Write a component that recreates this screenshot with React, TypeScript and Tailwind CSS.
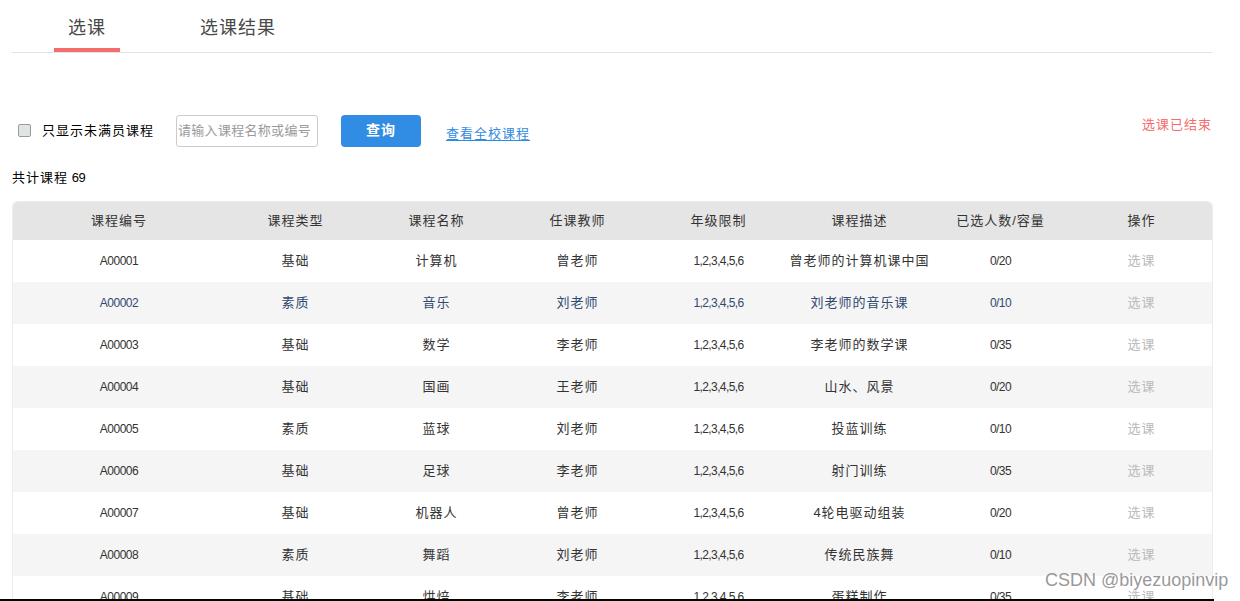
import React from 'react';

const font = { fontFamily: '"Liberation Sans", "Noto Sans CJK SC", sans-serif' };

const courses = [
  ['A00001', '基础', '计算机', '曾老师', '曾老师的计算机课中国', '0/20'],
  ['A00002', '素质', '音乐', '刘老师', '刘老师的音乐课', '0/10'],
  ['A00003', '基础', '数学', '李老师', '李老师的数学课', '0/35'],
  ['A00004', '基础', '国画', '王老师', '山水、风景', '0/20'],
  ['A00005', '素质', '蓝球', '刘老师', '投蓝训练', '0/10'],
  ['A00006', '基础', '足球', '李老师', '射门训练', '0/35'],
  ['A00007', '基础', '机器人', '曾老师', '4轮电驱动组装', '0/20'],
  ['A00008', '素质', '舞蹈', '刘老师', '传统民族舞', '0/10'],
  ['A00009', '基础', '烘焙', '李老师', '蛋糕制作', '0/35'],
];

const headers = ['课程编号', '课程类型', '课程名称', '任课教师', '年级限制', '课程描述', '已选人数/容量', '操作'];

const cols = 'grid grid-cols-[212px_repeat(7,1fr)]';

export default function App() {
  return (
    <div style={font} className="relative h-[601px] flex flex-col overflow-hidden bg-white text-[#333]">
      <div className="flex-1 min-h-0 overflow-hidden">
        {/* Tabs */}
        <div className="ml-[12px] w-[1200px] flex border-b border-[#e4e4e4] pl-[42px]">
          <div className="px-[14px] pt-[19px] pb-[11px] border-b-4 border-[#f56c6c] text-[18px] leading-[18px] tracking-[1px] text-[#4a4a4a]">
            选课
          </div>
          <div className="ml-[66px] px-[14px] pt-[19px] pb-[11px] border-b-4 border-transparent text-[18px] leading-[18px] tracking-[1px] text-[#4a4a4a]">
            选课结果
          </div>
        </div>

        {/* Filters */}
        <div className="mt-[61px] ml-[12px] w-[1200px] flex items-center h-[33px] pl-[6px]">
          <span className="w-[13px] h-[13px] rounded-[2px] border border-[#9a9a9a] bg-[#dfe5e5]" />
          <span className="ml-[11px] text-[13px] leading-[20px] tracking-[1px] text-black">只显示未满员课程</span>
          <div className="ml-[22px] w-[142px] h-[32px] rounded-[3px] border border-[#ccc] flex items-center pl-[1px] text-[13px] tracking-[0.3px] text-[#9a9a9a] whitespace-nowrap overflow-hidden">
            请输入课程名称或编号
          </div>
          <button className="ml-[23px] w-[80px] h-[32px] rounded-[4px] bg-[#318ce3] text-white text-[14px] font-bold tracking-[1px]">
            查询
          </button>
          <a className="ml-[25px] mt-[6px] text-[13px] leading-[20px] tracking-[1px] text-[#2f8be0] underline underline-offset-2">
            查看全校课程
          </a>
          <span className="ml-auto self-start mt-[1px] text-[13px] leading-[20px] tracking-[1px] text-[#f56c6c]">
            选课已结束
          </span>
        </div>

        <div className="mt-[21px] ml-[12px] text-[13px] leading-[20px] text-black">
          <span className="tracking-[1px]">共计课程</span> <span className="tracking-[-0.3px]">69</span>
        </div>

        {/* Table */}
        <div className="mt-[13px] ml-[12px] w-[1201px] rounded-t-[6px] border border-b-0 border-[#ececec] overflow-hidden">
          <div className={`${cols} h-[38px] bg-[#e5e5e5] items-center text-center text-[13px] tracking-[1px] text-[#333]`}>
            {headers.map((h) => (
              <div key={h}>{h}</div>
            ))}
          </div>
          {courses.map((c, i) => (
            <div
              key={c[0]}
              className={`${cols} h-[42px] items-center text-center text-[13px] ${i % 2 === 1 ? 'bg-[#f5f5f5]' : 'bg-white'} ${i === 1 ? 'text-[#2f4a70]' : 'text-[#333]'}`}
            >
              <div className="text-[12px] tracking-[-0.5px]">{c[0]}</div>
              <div className="tracking-[1px]">{c[1]}</div>
              <div className="tracking-[1px]">{c[2]}</div>
              <div className="tracking-[1px]">{c[3]}</div>
              <div className="text-[12px] tracking-[-0.6px]">1,2,3,4,5,6</div>
              <div className="tracking-[1px] whitespace-nowrap">{c[4]}</div>
              <div className="text-[12px] tracking-[-0.6px]">{c[5]}</div>
              <div className="tracking-[1px] text-[#bbb]">选课</div>
            </div>
          ))}
        </div>
      </div>
      <div className="h-[2px] w-[1214px] bg-black" />

      <div className="absolute left-[1045px] top-[569px] text-[18px] leading-[22px] text-[#8c8c8c]/90 whitespace-nowrap">
        CSDN @biyezuopinvip
      </div>
    </div>
  );
}
